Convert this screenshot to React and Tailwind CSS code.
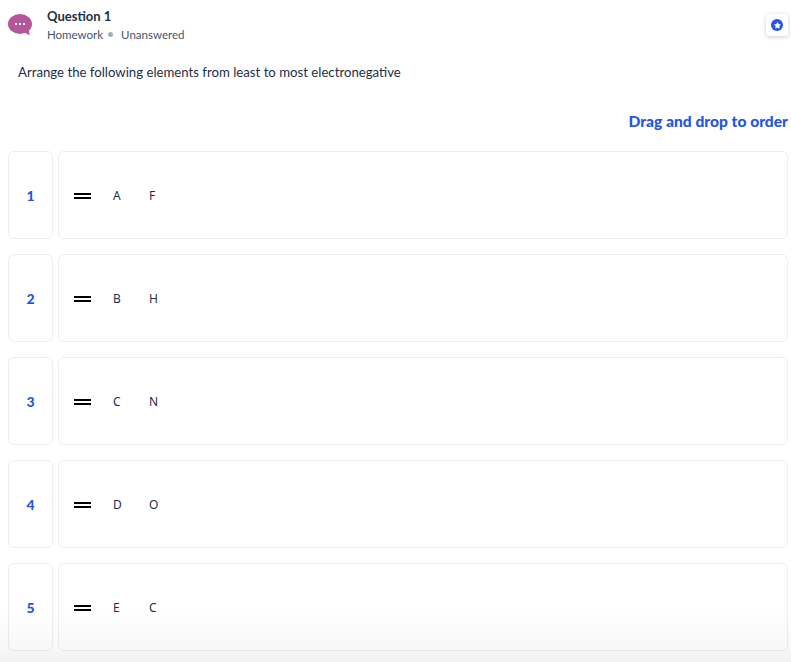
import { Star } from 'lucide-react';

const rows = [
  ['1', 'A', 'F'],
  ['2', 'B', 'H'],
  ['3', 'C', 'N'],
  ['4', 'D', 'O'],
  ['5', 'E', 'C'],
];

function BubbleIcon() {
  return (
    <svg width="24" height="22" viewBox="0 0 24 22" className="block">
      <ellipse cx="12" cy="10" rx="12" ry="10" fill="#b5559b" />
      <path d="M16 18l5.500 3.500-.5-6z" fill="#b5559b" />
      <rect x="7" y="9" width="2" height="2" fill="#fff" />
      <rect x="11" y="9" width="2" height="2" fill="#fff" />
      <rect x="15" y="9" width="2" height="2" fill="#fff" />
    </svg>
  );
}

export default function App() {
  return (
    <div className="relative h-[662px] w-[791px] overflow-hidden bg-white font-['Lato','Noto_Sans',sans-serif] text-[#1c2f45]">
      <header className="flex items-start pl-2 pr-[3px] pt-2">
        <div className="mt-[6px] w-[39px] shrink-0">
          <BubbleIcon />
        </div>
        <div className="flex-1">
          <h2 className="text-[13px] font-bold leading-[17px]">Question 1</h2>
          <div className="flex items-center text-[11.500px] leading-[19px] text-[#44566c]">
            Homework
            <span className="ml-[5px] mr-[8px] h-[5px] w-[5px] rounded-full bg-[#a3afbd]" />
            Unanswered
          </div>
        </div>
        <button className="mt-[6px] flex h-[22px] w-[22px] items-center justify-center rounded-[3px] bg-white shadow-[0_1px_4px_rgba(0,0,0,0.2)]">
          <span className="flex h-3 w-3 items-center justify-center rounded-full bg-[#2455e6]">
            <Star size={7} fill="#fff" stroke="#fff" />
          </span>
        </button>
      </header>

      <p className="mt-[18px] pl-[18px] text-[13.200px] leading-[20px]">
        Arrange the following elements from least to most electronegative
      </p>

      <div className="mt-[29px] pr-[3px] text-right text-[15.600px] font-black leading-[20px] text-[#2455e6]">
        Drag and drop to order
      </div>

      <div className="mt-[20px] flex flex-col gap-[15px] pl-2 pr-[3px]">
        {rows.map(([num, left, right]) => (
          <div key={num} className="flex h-[88px] gap-[5px]">
            <div className="flex w-[45px] shrink-0 items-center justify-center rounded-[6px] border border-[#eceef0] text-[14px] font-black text-[#2455e6]">
              {num}
            </div>
            <div className="flex flex-1 items-center rounded-[6px] border border-[#eceef0] pl-[15px] font-['Noto_Sans',sans-serif]">
              <div className="mt-[2px] flex w-[17px] flex-col gap-[2px]">
                <span className="h-[2px] bg-black" />
                <span className="h-[2px] bg-black" />
              </div>
              <span className="ml-[22px] w-[36px] pt-[2px] text-[12px]">{left}</span>
              <span className="pt-[2px] text-[12px]">{right}</span>
            </div>
          </div>
        ))}
      </div>

      <div className="pointer-events-none absolute bottom-0 left-0 h-[52px] w-full bg-[linear-gradient(to_bottom,transparent,rgba(0,0,0,0.03)_77%,rgba(0,0,0,0.06))]" />
    </div>
  );
}
